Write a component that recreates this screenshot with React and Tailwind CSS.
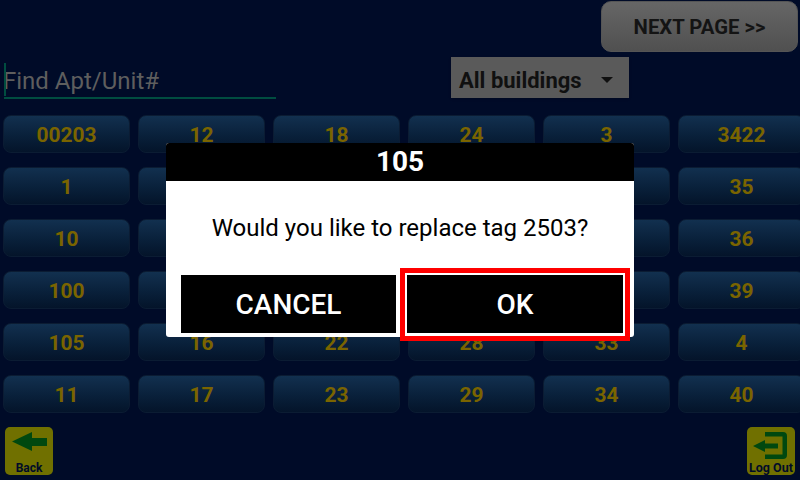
// cells fully hidden behind the dialog stay empty
const rows = [
  ['00203', '12', '18', '24', '3', '3422'],
  ['1', '', '', '', '', '35'],
  ['10', '', '', '', '', '36'],
  ['100', '', '', '', '', '39'],
  ['105', '16', '22', '28', '33', '4'],
  ['11', '17', '23', '29', '34', '40'],
];

const BackIcon = () => (
  <svg width="48" height="26" viewBox="0 0 48 26" className="shrink-0">
    <path d="M7 14.5 L27 5 L27 11 L42 11 L42 19 L27 19 L27 24 Z" fill="#00480f" />
  </svg>
);

const LogOutIcon = () => (
  <svg width="48" height="34" viewBox="0 0 48 34" className="shrink-0">
    <path d="M6 19 L18 13 L18 16.5 L31 16.5 L31 21.5 L18 21.5 L18 25 Z" fill="#00480f" />
    <path d="M18 5 H36 Q40 5 40 9 V28 Q40 32 36 32 H18 V27.5 H35.5 V9.5 H18 Z" fill="#00480f" />
  </svg>
);

export default function App() {
  return (
    <div className="relative w-[800px] h-[480px] overflow-hidden bg-[#000b28] font-['Roboto',sans-serif]">
      <div className="flex justify-end pt-px pr-[2px]">
        <button className="w-[197px] h-[51px] pt-px rounded-[10px] border border-[#555] bg-gradient-to-b from-[#666666] to-[#505050] text-[#141414] text-[20.3px] font-bold">
          NEXT PAGE &gt;&gt;
        </button>
      </div>

      <div className="flex items-start h-[63px] pt-[5px]">
        <div className="ml-1 w-[272px] mt-[6px] h-[36px] border-b-2 border-[#004d40] relative">
          <div className="absolute left-0 top-0 w-[2px] h-[33px] bg-[#004d40]" />
          <div className="-ml-px text-[24px] leading-[36px] text-[#5e5e5e] whitespace-nowrap">
            Find Apt/Unit#
          </div>
        </div>
        <div className="ml-[175px] w-[178px] h-[41px] pt-[5px] bg-[#5a5a5a] flex items-center pl-2 pr-[16px] justify-between shadow-sm">
          <span className="text-[22px] font-bold text-[#101010]">All buildings</span>
          <span className="w-0 h-0 border-x-[6px] border-x-transparent border-t-[6px] border-t-[#101010]" />
        </div>
      </div>

      <div className="grid grid-cols-[repeat(6,127px)] gap-x-[8px] gap-y-[14px] pl-[3px]">
        {rows.flat().map((label, i) => (
          <button
            key={i}
            className="h-[38px] pt-[3px] rounded-[8px] border border-[#0b1c33] bg-gradient-to-b from-[#12304f] to-[#04142a] text-[21px] font-bold text-[#7a6400] flex items-center justify-center"
          >
            {label}
          </button>
        ))}
      </div>

      <div className="flex justify-between px-[5px] mt-[14px]">
        <button className="w-[48px] h-[48px] rounded-[5px] bg-[#707000] flex flex-col items-center justify-between">
          <BackIcon />
          <span className="text-[12px] leading-[14px] font-bold text-[#000b28]">Back</span>
        </button>
        <button className="w-[48px] h-[48px] rounded-[5px] bg-[#707000] flex flex-col items-center justify-between">
          <LogOutIcon />
          <span className="text-[12.5px] leading-[14px] font-bold text-[#000b28] whitespace-nowrap">Log Out</span>
        </button>
      </div>

      <div className="absolute left-[166px] top-[143px] w-[468px] h-[194px] rounded-[3px] bg-white overflow-hidden flex flex-col">
        <div className="h-[38px] bg-black text-white text-[28px] font-bold flex items-center justify-center">105</div>
        <div className="h-[94px] flex items-center justify-center text-[24px] text-black">
          Would you like to replace tag 2503?
        </div>
        <div className="flex pl-[15px] gap-[11px]">
          <button className="w-[215px] h-[58px] pt-px bg-black text-white text-[28px] font-medium">CANCEL</button>
          <button className="w-[216px] h-[58px] pt-px bg-black text-white text-[28px] font-medium">OK</button>
        </div>
      </div>
      <div className="absolute left-[400px] top-[268px] w-[230px] h-[73px] border-[5px] border-[#ff0000] pointer-events-none">
        <div className="w-full h-full border-2 border-white" />
      </div>
    </div>
  );
}
